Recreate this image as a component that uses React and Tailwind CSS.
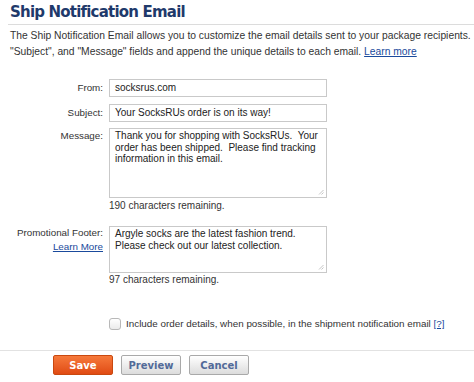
import React from "react";

const Label = ({ children }) => (
  <div className="w-[109px] shrink-0 text-right pr-[6px] text-[9.8px] leading-[14px] text-[#333] whitespace-nowrap">{children}</div>
);

const Resize = () => (
  <svg className="absolute right-[2px] bottom-[2px]" width="6" height="6" viewBox="0 0 6 6">
    <path d="M5.5 1 L1 5.5 M5.5 3.5 L3.5 5.5" stroke="#b5b5b5" strokeWidth="0.8" />
  </svg>
);

export default function App() {
  return (
    <div className="w-[474px] h-[382px] bg-white overflow-hidden font-['Liberation_Sans',Arial,sans-serif] text-[#333]">
      <div className="pl-[10px] pt-[1px]">
        <h1 className="font-['DejaVu_Sans',Verdana,sans-serif] font-bold text-[15px] leading-[22px] text-[#1f3a6b] tracking-[-0.8px] whitespace-nowrap">
          Ship Notification Email
        </h1>
      </div>
      <div className="ml-[8px] mt-[1px] h-px bg-[#dcdcdc]" />
      <p className="pl-[10px] pt-[3px] text-[10.3px] leading-[16px] text-[#333] whitespace-nowrap">
        The Ship Notification Email allows you to customize the email details sent to your package recipients.
        <br />
        "Subject", and "Message" fields and append the unique details to each email.{" "}
        <a className="text-[#1a4a9c] underline">Learn more</a>
      </p>

      <div className="mt-[19px] flex flex-col">
        <div className="flex items-center h-[18px]">
          <Label>From:</Label>
          <div className="w-[218px] h-[18px] border border-[#c9c9c9] px-[5px] text-[10px] leading-[16px] text-[#222] whitespace-nowrap">socksrus.com</div>
        </div>
        <div className="flex items-center h-[18px] mt-[7px]">
          <Label>Subject:</Label>
          <div className="w-[218px] h-[18px] border border-[#c9c9c9] px-[5px] text-[10px] leading-[16px] text-[#222] whitespace-nowrap">Your SocksRUs order is on its way!</div>
        </div>
        <div className="flex items-start mt-[6px]">
          <div className="pt-[1px]"><Label>Message:</Label></div>
          <div>
            <div className="relative w-[218px] h-[70px] border border-[#c9c9c9] px-[5px] pt-[1px] text-[10px] leading-[11.5px] text-[#222] whitespace-nowrap">
              Thank you for shopping with SocksRUs.&nbsp; Your
              <br />
              order has been shipped.&nbsp; Please find tracking
              <br />
              information in this email.
              <Resize />
            </div>
            <div className="text-[10px] leading-[14px] mt-[1px]">190 characters remaining.</div>
          </div>
        </div>
        <div className="flex items-start mt-[13px]">
          <div className="w-[109px] shrink-0 text-right pr-[6px] text-[9.8px] leading-[14px] text-[#333] whitespace-nowrap">
            <div>Promotional Footer:</div>
            <a className="text-[#1a4a9c] underline">Learn More</a>
          </div>
          <div>
            <div className="relative w-[218px] h-[47px] border border-[#c9c9c9] px-[5px] pt-[1px] text-[10px] leading-[11.5px] text-[#222] whitespace-nowrap">
              Argyle socks are the latest fashion trend.
              <br />
              Please check out our latest collection.
              <Resize />
            </div>
            <div className="text-[10px] leading-[14px]">97 characters remaining.</div>
          </div>
        </div>
        <div className="flex items-center h-[14px] mt-[30px] pl-[109px]">
          <div className="shrink-0 w-[12px] h-[12px] rounded-[3px] border border-[#b8b8b8] bg-gradient-to-b from-white to-[#ebebeb]" />
          <span className="ml-[5px] text-[9.85px] leading-[14px] text-[#333] whitespace-nowrap">
            Include order details, when possible, in the shipment notification email{" "}
            <a className="text-[#1a4a9c] underline">[?]</a>
          </span>
        </div>
      </div>

      <div className="mt-[19px] h-px bg-[#e2e2e2]" />
      <div className="flex gap-[8px] pl-[53px] mt-[4px] font-['DejaVu_Sans',Verdana,sans-serif] font-bold text-[10px]">
        <button className="w-[60px] h-[20px] rounded-[2px] border border-[#c9480f] bg-gradient-to-b from-[#f6793a] to-[#e04a12] text-white">
          Save
        </button>
        <button className="w-[60px] h-[20px] rounded-[2px] border border-[#a9a9a9] bg-gradient-to-b from-white to-[#dcdcdc] text-[#526a98]">
          Preview
        </button>
        <button className="w-[60px] h-[20px] rounded-[2px] border border-[#a9a9a9] bg-gradient-to-b from-white to-[#dcdcdc] text-[#526a98]">
          Cancel
        </button>
      </div>
    </div>
  );
}
